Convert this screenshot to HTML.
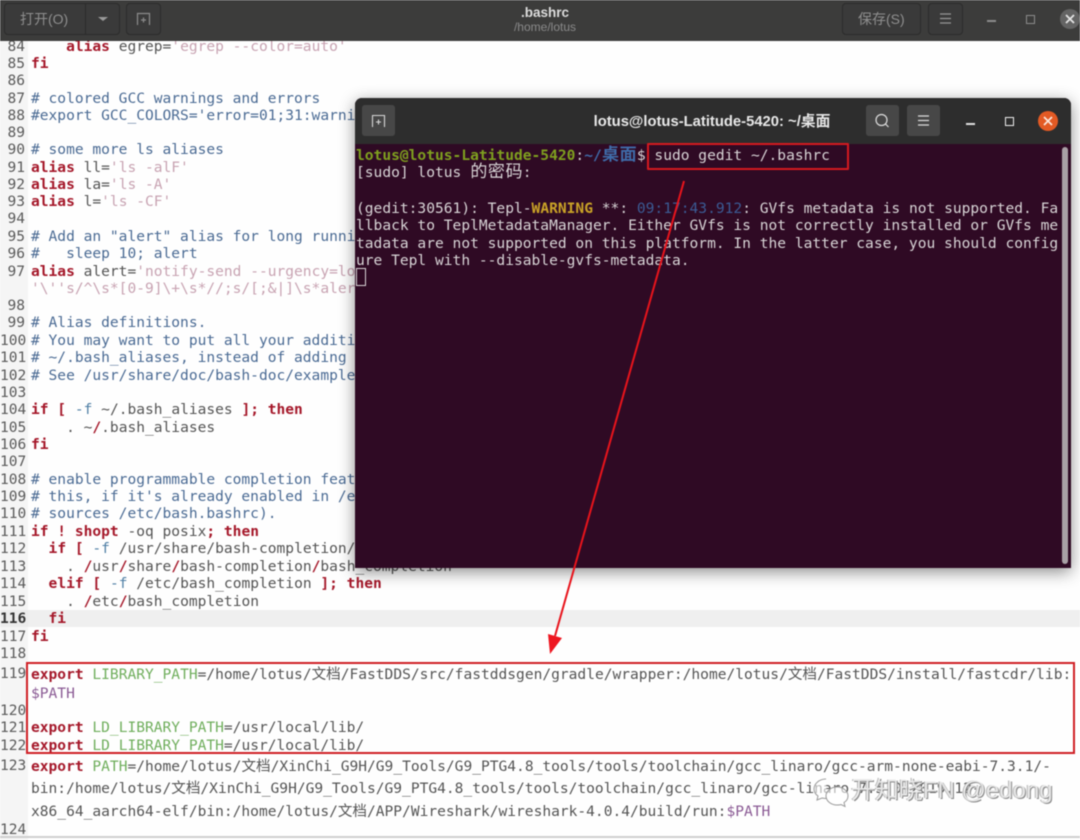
<!DOCTYPE html>
<html lang="zh"><head><meta charset="utf-8"><title>.bashrc</title>
<style>
html,body{margin:0;padding:0;background:#fff}
#root{position:relative;width:1080px;height:840px;overflow:hidden;background:#fefefe;filter:blur(.4px);font-family:"DejaVu Sans Mono","Noto Sans CJK SC",monospace;font-size:14.57px}
.abs{position:absolute}
.l{position:absolute;left:31px;margin-top:1px;line-height:17px;white-space:pre;color:#555}
.n{position:absolute;left:0;margin-top:1px;width:25px;text-align:right;line-height:17px;color:#5a5a5a}
.k{color:#a5182a;font-weight:bold}
.c{color:#4b6b94}
.s{color:#c8a3b2}
.v{color:#6fae5c}
.p{color:#8a5a94}
.b{color:#4f7fa5}
.t{position:absolute;left:356px;margin-top:1px;width:705px;line-height:17px;white-space:pre;color:#d8d4d6;font-size:14.58px}
.cj{display:inline-block;width:17.55px;text-align:center;font-size:17px;line-height:17px;vertical-align:top}
.btn{position:absolute;border:1px solid #2b2b2b;border-radius:4px;background:#3a3a3a;box-sizing:border-box}
.txt{position:absolute;font-family:"Liberation Sans","Noto Sans CJK SC",sans-serif;white-space:pre}
.tb{position:absolute;background:#474747;border-radius:3px}
</style></head><body>
<div id="root">
<div class="abs" style="left:0;top:41px;width:28px;height:799px;background:#f5f5f5"></div>
<div class="abs" style="left:28px;top:610px;width:1052px;height:17px;background:#efefef"></div>
<div class="abs" style="left:0;top:610px;width:28px;height:17px;background:#ececec"></div>
<div class="abs" style="left:0;top:836px;width:1080px;height:2px;background:#cfcfcf"></div>

<div class="n" style="top:37px">84</div><div class="l" style="top:37px">    <span class="k">alias</span> egrep=<span class="s">'egrep --color=auto'</span></div>
<div class="n" style="top:54px">85</div><div class="l k" style="top:54px">fi</div>
<div class="n" style="top:71px">86</div>
<div class="n" style="top:89px">87</div><div class="l c" style="top:89px"># colored GCC warnings and errors</div>
<div class="n" style="top:106px">88</div><div class="l c" style="top:106px">#export GCC_COLORS='error=01;31:warning=01;35:note=01;36:caret=01;32:locus=01:quote=01'</div>
<div class="n" style="top:123px">89</div>
<div class="n" style="top:140px">90</div><div class="l c" style="top:140px"># some more ls aliases</div>
<div class="n" style="top:158px">91</div><div class="l" style="top:158px"><span class="k">alias</span> ll=<span class="s">'ls -alF'</span></div>
<div class="n" style="top:175px">92</div><div class="l" style="top:175px"><span class="k">alias</span> la=<span class="s">'ls -A'</span></div>
<div class="n" style="top:192px">93</div><div class="l" style="top:192px"><span class="k">alias</span> l=<span class="s">'ls -CF'</span></div>
<div class="n" style="top:209px">94</div>
<div class="n" style="top:227px">95</div><div class="l c" style="top:227px"># Add an "alert" alias for long running commands.  Use like so:</div>
<div class="n" style="top:244px">96</div><div class="l c" style="top:244px">#   sleep 10; alert</div>
<div class="n" style="top:262px">97</div><div class="l" style="top:262px"><span class="k">alias</span> alert=<span class="s">'notify-send --urgency=low -i "$([ $? = 0 ] &amp;&amp; echo terminal || echo error)"</span></div>
<div class="l s" style="top:279px">'\''s/^\s*[0-9]\+\s*//;s/[;&amp;|]\s*alert$//'\'''</div>
<div class="n" style="top:296px">98</div>
<div class="n" style="top:313px">99</div><div class="l c" style="top:313px"># Alias definitions.</div>
<div class="n" style="top:331px">100</div><div class="l c" style="top:331px"># You may want to put all your additions into a separate file like</div>
<div class="n" style="top:348px">101</div><div class="l c" style="top:348px"># ~/.bash_aliases, instead of adding them here directly.</div>
<div class="n" style="top:366px">102</div><div class="l c" style="top:366px"># See /usr/share/doc/bash-doc/examples in the bash-doc package.</div>
<div class="n" style="top:383px">103</div>
<div class="n" style="top:400px">104</div><div class="l" style="top:400px"><span class="k">if [</span> <span class="b">-f</span> ~/.bash_aliases <span class="k">]; then</span></div>
<div class="n" style="top:418px">105</div><div class="l" style="top:418px">    . ~<span class="k">/</span>.bash_aliases</div>
<div class="n" style="top:435px">106</div><div class="l k" style="top:435px">fi</div>
<div class="n" style="top:452px">107</div>
<div class="n" style="top:470px">108</div><div class="l c" style="top:470px"># enable programmable completion features (you don't need to enable</div>
<div class="n" style="top:487px">109</div><div class="l c" style="top:487px"># this, if it's already enabled in /etc/bash.bashrc and /etc/profile</div>
<div class="n" style="top:504px">110</div><div class="l c" style="top:504px"># sources /etc/bash.bashrc).</div>
<div class="n" style="top:522px">111</div><div class="l" style="top:522px"><span class="k">if ! shopt</span> -oq posix<span class="k">; then</span></div>
<div class="n" style="top:539px">112</div><div class="l" style="top:539px">  <span class="k">if [</span> <span class="b">-f</span> /usr/share/bash-completion/bash_completion <span class="k">]; then</span></div>
<div class="n" style="top:557px">113</div><div class="l" style="top:557px">    . <span class="k">/</span>usr<span class="k">/</span>share<span class="k">/</span>bash-completion<span class="k">/</span>bash_completion</div>
<div class="n" style="top:574px">114</div><div class="l" style="top:574px">  <span class="k">elif [</span> <span class="b">-f</span> /etc/bash_completion <span class="k">]; then</span></div>
<div class="n" style="top:592px">115</div><div class="l" style="top:592px">    . <span class="k">/</span>etc<span class="k">/</span>bash_completion</div>
<div class="n" style="top:609px;font-weight:bold;color:#333">116</div><div class="l k" style="top:609px">  fi</div>
<div class="n" style="top:627px">117</div><div class="l k" style="top:627px">fi</div>
<div class="n" style="top:644px">118</div>
<div class="n" style="top:664px">119</div><div class="l" style="top:665px"><span class="k">export</span> <span class="v">LIBRARY_PATH</span>=/home/lotus/文档/FastDDS/src/fastddsgen/gradle/wrapper:/home/lotus/文档/FastDDS/install/fastcdr/lib:</div>
<div class="l p" style="top:684px">$PATH</div>
<div class="n" style="top:701px">120</div>
<div class="n" style="top:718px">121</div><div class="l" style="top:718px"><span class="k">export</span> <span class="v">LD_LIBRARY_PATH</span>=/usr/local/lib/</div>
<div class="n" style="top:736px">122</div><div class="l" style="top:736px"><span class="k">export</span> <span class="v">LD_LIBRARY_PATH</span>=/usr/local/lib/</div>
<div class="n" style="top:756px">123</div><div class="l" style="top:757px"><span class="k">export</span> <span class="v">PATH</span>=/home/lotus/文档/XinChi_G9H/G9_Tools/G9_PTG4.8_tools/tools/toolchain/gcc_linaro/gcc-arm-none-eabi-7.3.1/-</div>
<div class="l" style="top:779px">bin:/home/lotus/文档/XinChi_G9H/G9_Tools/G9_PTG4.8_tools/tools/toolchain/gcc_linaro/gcc-linaro-7.5.0-2019.12-</div>
<div class="l" style="top:802px">x86_64_aarch64-elf/bin:/home/lotus/文档/APP/Wireshark/wireshark-4.0.4/build/run:<span class="p">$PATH</span></div>
<div class="n" style="top:820px">124</div>

<!-- gedit header -->
<div class="abs" style="left:0;top:0;width:1080px;height:41px;background:#3c3c3b"></div>
<div class="btn" style="left:4px;top:3px;width:116px;height:32px"></div>
<div class="abs" style="left:85px;top:3px;width:1px;height:32px;background:#2b2b2b"></div>
<div class="txt" style="left:20px;top:10px;font-size:14px;line-height:18px;color:#8f8f8f">打开(O)</div>
<div class="abs" style="left:98px;top:17px;width:0;height:0;border-left:5px solid transparent;border-right:5px solid transparent;border-top:4px solid #9a9a9a"></div>
<div class="btn" style="left:126px;top:3px;width:35px;height:32px"></div>
<svg class="abs" style="left:136px;top:12px" width="16" height="15" fill="none" stroke="#8c8c8c" stroke-width="1.2"><path d="M1.5 13V1.5h12V13M7.5 5.5v5M5 8h5"/></svg>
<div class="txt" style="left:445px;top:4px;width:200px;text-align:center;font-size:13.5px;line-height:17px;font-weight:bold;color:#dcdcdc">.bashrc</div>
<div class="txt" style="left:445px;top:20px;width:200px;text-align:center;font-size:12px;line-height:15px;color:#8a8a8a">/home/lotus</div>
<div class="btn" style="left:842px;top:3px;width:79px;height:32px"></div>
<div class="txt" style="left:858px;top:10px;font-size:14px;line-height:18px;color:#8f8f8f">保存(S)</div>
<div class="btn" style="left:928px;top:3px;width:35px;height:32px"></div>
<svg class="abs" style="left:938px;top:11px" width="15" height="15" stroke="#979797" stroke-width="1.3"><path d="M2 3h11M2 7.5h11M2 12h11"/></svg>
<div class="abs" style="left:987px;top:20px;width:9px;height:2px;background:#8c8c8c"></div>
<div class="abs" style="left:1026px;top:15px;width:7px;height:7px;border:1.3px solid #8c8c8c"></div>
<div class="abs" style="left:1060px;top:9px;width:20px;height:20px;border-radius:10px;background:#646464"></div>
<svg class="abs" style="left:1064px;top:13px" width="12" height="12" stroke="#e4e4e4" stroke-width="1.8"><path d="M2 2l8 8M10 2l-8 8"/></svg>

<!-- terminal -->
<div class="abs" style="left:355px;top:98px;width:716px;height:470px;border-radius:7px 7px 0 0;background:#2f0a24;box-shadow:0 4px 16px rgba(0,0,0,.45)"></div>
<div class="abs" style="left:355px;top:98px;width:716px;height:46px;border-radius:7px 7px 0 0;background:#2d2d2d"></div>
<div class="tb" style="left:362px;top:105px;width:33px;height:31px"></div>
<svg class="abs" style="left:371px;top:114px" width="16" height="15" fill="none" stroke="#d8d8d8" stroke-width="1.1"><path d="M1.5 13V1.5h12V13M7.5 5.5v5M5 8h5"/></svg>
<div class="txt" style="left:562px;top:113px;width:300px;text-align:center;font-size:14.8px;line-height:18px;font-weight:bold;color:#e8e8e8">lotus@lotus-Latitude-5420: ~/桌面</div>
<div class="tb" style="left:866px;top:105px;width:33px;height:31px"></div>
<svg class="abs" style="left:874px;top:113px" width="17" height="16" fill="none" stroke="#dcdcdc" stroke-width="1.2"><circle cx="7.5" cy="7" r="5.5"/><path d="M11.5 11l3 3"/></svg>
<div class="tb" style="left:907px;top:105px;width:33px;height:31px"></div>
<svg class="abs" style="left:916px;top:113px" width="15" height="15" stroke="#dcdcdc" stroke-width="1.2"><path d="M2 3h11M2 7.5h11M2 12h11"/></svg>
<div class="abs" style="left:966px;top:123px;width:9px;height:2px;background:#e0e0e0"></div>
<div class="abs" style="left:1005px;top:117px;width:7px;height:7px;border:1.4px solid #eee"></div>
<div class="abs" style="left:1038px;top:111px;width:20px;height:20px;border-radius:10px;background:#e35a24"></div>
<svg class="abs" style="left:1042px;top:115px" width="12" height="12" stroke="#fbe6dc" stroke-width="1.7"><path d="M2 2l8 8M10 2l-8 8"/></svg>

<div class="t" style="top:146px"><span style="color:#7fa01f;font-weight:bold">lotus@lotus-Latitude-5420</span>:<span style="color:#3f6ba8;font-weight:bold">~/<span class="cj">桌</span><span class="cj">面</span></span>$ sudo gedit ~/.bashrc</div>
<div class="t" style="top:163px">[sudo] lotus <span class="cj">的</span><span class="cj">密</span><span class="cj">码</span>:</div>
<div class="t" style="top:199px">(gedit:30561): Tepl-<span style="color:#c9a227;font-weight:bold">WARNING</span> **: <span style="color:#3b5b94">09:17:43.912</span>: GVfs metadata is not supported. Fa</div>
<div class="t" style="top:216px">llback to TeplMetadataManager. Either GVfs is not correctly installed or GVfs me</div>
<div class="t" style="top:234px">tadata are not supported on this platform. In the latter case, you should config</div>
<div class="t" style="top:251px">ure Tepl with --disable-gvfs-metadata.</div>
<div class="abs" style="left:356px;top:268px;width:8px;height:16px;border:1px solid #d8d4d6"></div>
<div class="abs" style="left:1062px;top:147px;width:6px;height:417px;border-radius:3px;background:#a8a0a5"></div>

<!-- annotations -->
<div class="abs" style="left:647px;top:143px;width:198px;height:23px;border:2px solid #d4191f;border-radius:1px"></div>
<div class="abs" style="left:26px;top:662px;width:1045px;height:88px;border:2px solid #cf1f25"></div>
<svg class="abs" style="left:0;top:0" width="1080" height="840" fill="none"><path d="M684 181L555 636" stroke="#e8141c" stroke-width="2"/><path d="M550 654L548 634L562 638Z" fill="#ee1620"/></svg>

<!-- watermark -->
<svg class="abs" style="left:812px;top:776px" width="40" height="34" fill="rgba(255,255,255,.6)" stroke="#9a9a9a" stroke-width="1"><path d="M14 3C7 3 2 8 2 13c0 3 1 5 4 7l-1 4 5-2c2 .5 3 .5 5 .5"/><path d="M25 11c-6 0-11 4-11 9s5 9 11 9c1.500 0 3 0 4-.5l4 2-1-4c2.500-1.500 4-4 4-6.500 0-5-5-9-11-9z"/></svg>
<div class="txt" style="left:851px;top:776px;font-size:24px;line-height:30px;color:rgba(255,255,255,.75);text-shadow:1px 1px 0 #8a8a8a,-1px 0 0 #b5b5b5">开知晓FN @edong</div>
</div>
</body></html>
